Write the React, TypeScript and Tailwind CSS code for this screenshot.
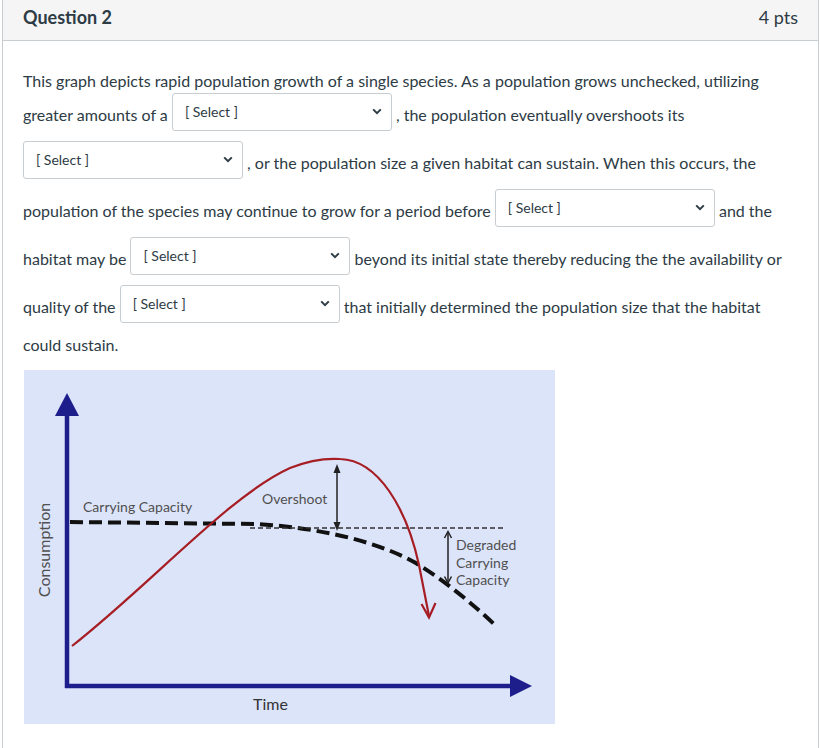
import React from 'react';

const SelectBox: React.FC = () => (
  <span className="inline-flex h-[38px] w-[220px] items-center justify-between rounded-[3px] border border-[#c7cdd1] bg-white pl-[12px] pr-[9px] align-middle mb-[10px] text-[14px] leading-[20px] text-[#2d3b45]">
    <span>[ Select ]</span>
    <svg width="10" height="7" viewBox="0 0 10 7" className="mt-[-1px]">
      <path d="M1.2 1.4 L5 5.2 L8.8 1.4" fill="none" stroke="#2d3b45" strokeWidth="2" />
    </svg>
  </span>
);

const Chart: React.FC = () => (
  <svg width="531" height="354" viewBox="0 0 531 354" className="block bg-[#dce4fa]">
    {/* axes */}
    <line x1="43" y1="44" x2="43" y2="318" stroke="#1d1d8c" strokeWidth="4.5" />
    <polygon points="43,23 31,46 55,46" fill="#1d1d8c" />
    <line x1="41" y1="316" x2="488" y2="316" stroke="#1d1d8c" strokeWidth="4.5" />
    <polygon points="508,316 486,305 486,327" fill="#1d1d8c" />

    {/* carrying capacity lines */}
    <path d="M46,152 L230,154 C290,157 350,170 390,192 C420,210 450,235 471,255" fill="none" stroke="#111" strokeWidth="4" strokeDasharray="13 6" />
    <line x1="226" y1="158" x2="480" y2="158" stroke="#333" strokeWidth="1.5" strokeDasharray="5 3" />

    {/* population curve */}
    <path d="M48,276 C126,215 206,125 266,98 C286,90 301,88 316,89 C355,90 383,140 395,195 L405,246" fill="none" stroke="#a61e24" strokeWidth="2.2" />
    <path d="M397.5,234 L405,247.5 L411.5,233" fill="none" stroke="#a61e24" strokeWidth="2.2" />

    {/* overshoot arrow */}
    <line x1="313" y1="101" x2="313" y2="154" stroke="#222" strokeWidth="1.5" />
    <polygon points="313,94 309.5,103 316.5,103" fill="#222" />
    <polygon points="313,161 309.5,152 316.5,152" fill="#222" />

    {/* degraded arrow */}
    <line x1="424" y1="162" x2="424" y2="213" stroke="#222" strokeWidth="1.5" />
    <path d="M420.5,168 L424,161.5 L427.5,168" fill="none" stroke="#222" strokeWidth="1.5" />
    <path d="M420.5,206.5 L424,213 L427.5,206.5" fill="none" stroke="#222" strokeWidth="1.5" />

    <g fontFamily="Lato, sans-serif" fill="#505050">
      <text x="59" y="142" fontSize="14">Carrying Capacity</text>
      <text x="238" y="134" fontSize="14">Overshoot</text>
      <text x="432" y="180" fontSize="14">Degraded</text>
      <text x="432" y="197.5" fontSize="14">Carrying</text>
      <text x="432" y="215" fontSize="14">Capacity</text>
      <text x="229" y="340" fontSize="16" fill="#333">Time</text>
      <text x="0" y="0" fontSize="16" transform="translate(26,180) rotate(-90)" textAnchor="middle">Consumption</text>
    </g>
  </svg>
);

export default function App() {
  return (
    <div className="min-h-screen bg-white font-['Lato',sans-serif] text-[#2d3b45]">
      <div className="ml-[2px] w-[817px] border-x border-[#c7cdd1]">
        {/* Header */}
        <div className="flex h-[41px] items-start justify-between border-b border-[#c7cdd1] bg-[#f5f5f5] px-5 pt-[5px] text-[18px] leading-[24px]">
          <span className="font-bold">Question 2</span>
          <span>4 pts</span>
        </div>

        {/* Body */}
        <div className="px-5 pt-[28px] pb-6">
          <p className="text-[16px] leading-[24px]">
            This graph depicts rapid population growth of a single species. As a population grows unchecked, utilizing greater amounts of a <SelectBox /> , the population eventually overshoots its <SelectBox /> , or the population size a given habitat can sustain. When this occurs, the population of the species may continue to grow for a period before <SelectBox /> and the habitat may be <SelectBox /> beyond its initial state thereby reducing the the availability or quality of the <SelectBox /> that initially determined the population size that the habitat could sustain.
          </p>
          <div className="mt-[13px] ml-[1px]">
            <Chart />
          </div>
        </div>
      </div>
    </div>
  );
}
